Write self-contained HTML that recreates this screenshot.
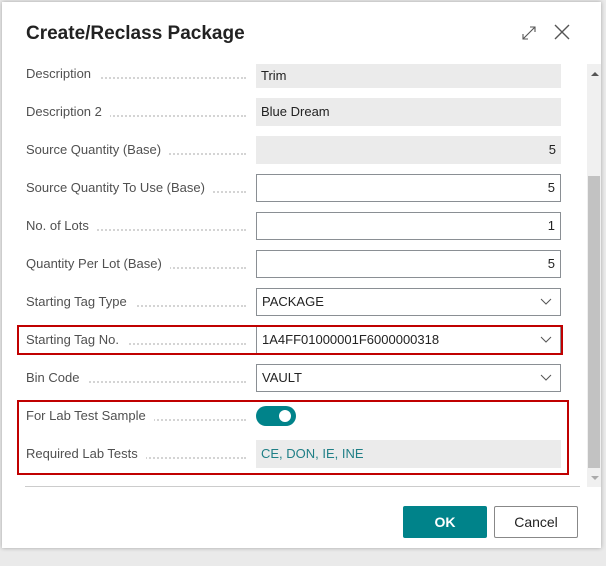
<!DOCTYPE html>
<html><head><style>
*{margin:0;padding:0;box-sizing:border-box}
body{width:606px;height:566px;background:#eaeaea;position:relative;overflow:hidden;font-family:"Segoe UI","Liberation Sans",sans-serif;font-size:13px;color:#333}
.dlg{position:absolute;left:2px;top:2px;width:599px;height:546px;background:#fff;box-shadow:0 0 4px rgba(0,0,0,.3)}
.title{position:absolute;left:24px;top:21px;font-size:19px;font-weight:600;color:#222}
.lab{position:absolute;left:24px;width:220px;height:20px;color:#505050;white-space:nowrap;overflow:hidden}
.lab span{background:#fff;padding-right:8px;position:relative;z-index:1}
.lab:after{content:"";position:absolute;left:0;right:0;top:11px;border-bottom:2px dotted #d4d4d4}
.f{position:absolute;left:254px;width:305px;height:28px;padding:6px 5px;color:#222;white-space:nowrap}
.ro{background:#ebebeb}
.ed{border:1px solid #8a8f94;background:#fff;padding:5px 5px}
.r{text-align:right}
.chev{position:absolute;right:8px;top:9px}
.red{position:absolute;border:2px solid #c00000}
</style></head><body>
<div class="dlg">
<div class="title">Create/Reclass Package</div>
<svg style="position:absolute;left:519px;top:23px" width="16" height="16" viewBox="0 0 16 16" fill="none" stroke="#555" stroke-width="1.1"><path d="M2 14L14 2M9 2h5v5M2 9v5h5"/></svg>
<svg style="position:absolute;left:552px;top:22px" width="16" height="16" viewBox="0 0 16 16" stroke="#555" stroke-width="1.4"><path d="M1 1L15 15M15 1L1 15"/></svg>

<div class="lab" style="top:64px"><span>Description</span></div>
<div class="f ro" style="top:62px;height:24px;padding-top:4px">Trim</div>
<div class="lab" style="top:102px"><span>Description 2</span></div>
<div class="f ro" style="top:96px">Blue Dream</div>
<div class="lab" style="top:140px"><span>Source Quantity (Base)</span></div>
<div class="f ro r" style="top:134px">5</div>
<div class="lab" style="top:178px"><span>Source Quantity To Use (Base)</span></div>
<div class="f ed r" style="top:172px">5</div>
<div class="lab" style="top:216px"><span>No. of Lots</span></div>
<div class="f ed r" style="top:210px">1</div>
<div class="lab" style="top:254px"><span>Quantity Per Lot (Base)</span></div>
<div class="f ed r" style="top:248px">5</div>
<div class="lab" style="top:292px"><span>Starting Tag Type</span></div>
<div class="f ed" style="top:286px">PACKAGE<svg class="chev" width="12" height="8" viewBox="0 0 12 8" fill="none" stroke="#555"><path d="M1 1l5 5 5-5"/></svg></div>
<div class="lab" style="top:330px"><span>Starting Tag No.</span></div>
<div class="f ed" style="top:324px">1A4FF01000001F6000000318<svg class="chev" width="12" height="8" viewBox="0 0 12 8" fill="none" stroke="#555"><path d="M1 1l5 5 5-5"/></svg></div>
<div class="lab" style="top:368px"><span>Bin Code</span></div>
<div class="f ed" style="top:362px">VAULT<svg class="chev" width="12" height="8" viewBox="0 0 12 8" fill="none" stroke="#555"><path d="M1 1l5 5 5-5"/></svg></div>
<div class="lab" style="top:406px"><span>For Lab Test Sample</span></div>
<div style="position:absolute;left:254px;top:404px;width:40px;height:20px;border-radius:10px;background:#00838a"><div style="position:absolute;right:5px;top:4px;width:12px;height:12px;border-radius:6px;background:#fff"></div></div>
<div class="lab" style="top:444px"><span>Required Lab Tests</span></div>
<div class="f ro" style="top:438px;color:#1f7f86">CE, DON, IE, INE</div>

<div class="red" style="left:15px;top:323px;width:546px;height:30px"></div>
<div class="red" style="left:15px;top:398px;width:552px;height:75px"></div>

<div style="position:absolute;left:585px;top:62px;width:14px;height:423px;background:#f0f0f0"></div>
<div style="position:absolute;left:586px;top:174px;width:12px;height:292px;background:#c2c2c2"></div>
<div style="position:absolute;left:589px;top:70px;width:0;height:0;border-left:4px solid transparent;border-right:4px solid transparent;border-bottom:4px solid #555"></div>
<div style="position:absolute;left:589px;top:474px;width:0;height:0;border-left:4px solid transparent;border-right:4px solid transparent;border-top:4px solid #aaa"></div>

<div style="position:absolute;left:23px;top:484px;width:555px;height:1px;background:#ccc"></div>
<div style="position:absolute;left:401px;top:504px;width:84px;height:32px;background:#00838a;color:#fff;font-weight:600;font-size:14px;text-align:center;line-height:32px;border-radius:2px">OK</div>
<div style="position:absolute;left:492px;top:504px;width:84px;height:32px;border:1px solid #888;color:#222;font-size:14px;text-align:center;line-height:30px;border-radius:2px">Cancel</div>
</div>
</body></html>
